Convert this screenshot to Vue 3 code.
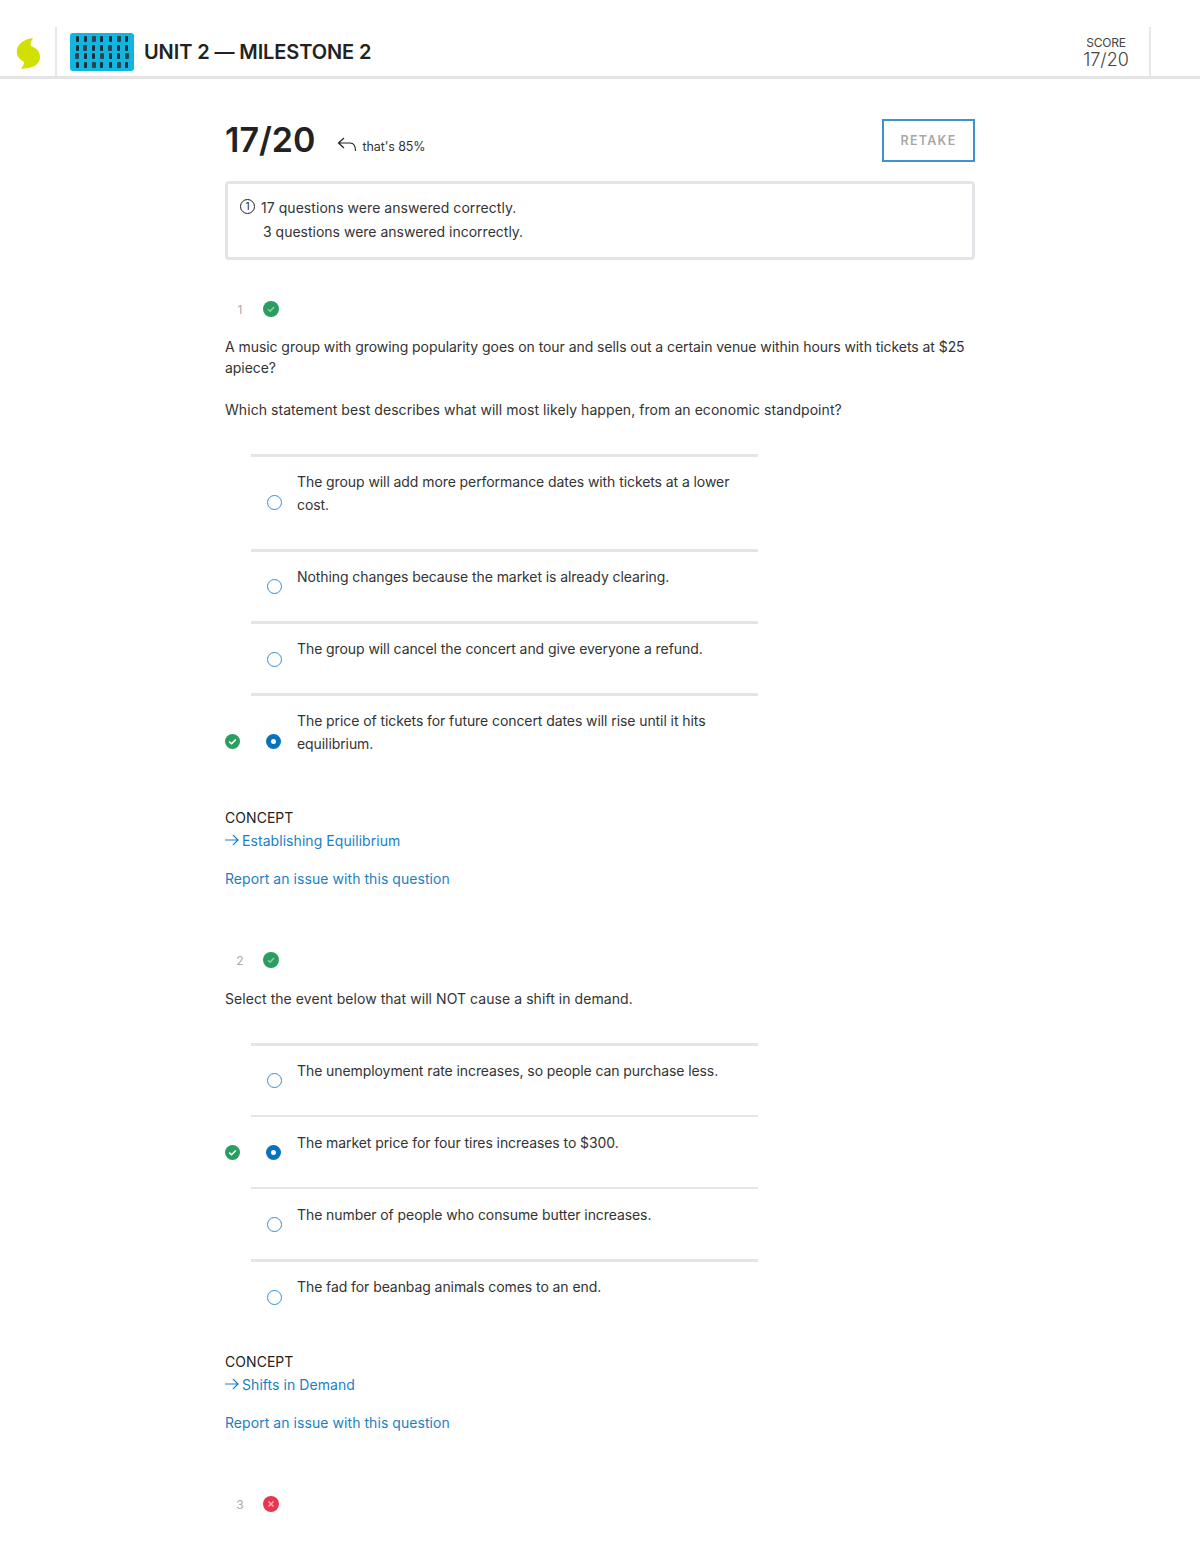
<script setup>
const questions = [
  {
    num: 1, paragraphs: ['A music group with growing popularity goes on tour and sells out a certain venue within hours with tickets at $25 apiece?', 'Which statement best describes what will most likely happen, from an economic standpoint?'],
    options: [
      { text: 'The group will add more performance dates with tickets at a lower cost.', tall: true },
      { text: 'Nothing changes because the market is already clearing.' },
      { text: 'The group will cancel the concert and give everyone a refund.' },
      { text: 'The price of tickets for future concert dates will rise until it hits equilibrium.', picked: true, tall: true }
    ],
    concept: 'Establishing Equilibrium'
  },
  {
    num: 2, paragraphs: ['Select the event below that will NOT cause a shift in demand.'],
    options: [
      { text: 'The unemployment rate increases, so people can purchase less.' },
      { text: 'The market price for four tires increases to $300.', picked: true, thin: true },
      { text: 'The number of people who consume butter increases.', thin: true },
      { text: 'The fad for beanbag animals comes to an end.' }
    ],
    concept: 'Shifts in Demand'
  }
]
const figures = Array.from({ length: 28 }, (_, i) => i)
</script>

<template>
  <div class="page">
    <header class="topbar">
      <div class="logo-cell">
        <svg width="24" height="31" viewBox="0 0 24 31" class="logo"><path d="M17 0 C15 3 14 6 15 8 C20 10 24 13 24 19 C24 25 19 29 12 30 L5 31 C7 28 8 26 8 24 C3 21 0 17 1 12 C2 5 9 1 17 0 Z" fill="#d2e000"/></svg>
      </div>
      <div class="thumb">
        <i v-for="f in figures" :key="f" class="figure"></i>
      </div>
      <h1 class="unit">UNIT 2 — MILESTONE 2</h1>
      <div class="score">
        <span class="score-label">SCORE</span>
        <span class="score-value">17/20</span>
      </div>
    </header>

    <main class="main">
      <div class="summary">
        <div class="big-score">17/20</div>
        <svg class="back" width="20" height="16" viewBox="0 0 20 16"><path d="M7 2 L1.5 7 L7 12 M2 7 H13 C16.5 7 18.5 9.5 18.5 15" fill="none" stroke="#222" stroke-width="1.2"/></svg>
        <span class="thats">that's 85%</span>
        <button class="retake">RETAKE</button>
      </div>

      <div class="notice">
        <span class="info">1</span>
        <div>
          <p class="notice-line">17 questions were answered correctly.</p>
          <p class="notice-line second">3 questions were answered incorrectly.</p>
        </div>
      </div>

      <section v-for="q in questions" :key="q.num" class="question">
        <div class="q-head">
          <span class="q-num">{{ q.num }}</span>
          <svg class="status" width="16" height="16" viewBox="0 0 16 16"><circle cx="8" cy="8" r="8" fill="#2a9d5f"/><path d="M5 8.2 L7.2 10.2 L11 6" fill="none" stroke="#8fcfae" stroke-width="1.5"/></svg>
        </div>
        <p v-for="(p, i) in q.paragraphs" :key="i" class="q-text">{{ p }}</p>
        <ul class="options">
          <li v-for="(o, i) in q.options" :key="i" class="option" :class="{ tall: o.tall, thin: o.thin, picked: o.picked }">
            <svg v-if="o.picked" class="opt-check" width="15" height="15" viewBox="0 0 16 16"><circle cx="8" cy="8" r="8" fill="#2a9d5f"/><path d="M4.5 8.2 L7 10.4 L11.5 5.8" fill="none" stroke="#fff" stroke-width="1.7"/></svg>
            <span class="radio"></span>
            <span class="opt-text">{{ o.text }}</span>
          </li>
        </ul>
        <div class="concept">CONCEPT</div>
        <a class="link concept-link"><svg width="14" height="12" viewBox="0 0 14 12"><path d="M0 6 H13 M8 1 L13 6 L8 11" fill="none" stroke="#1a7fc4" stroke-width="1.1"/></svg>{{ q.concept }}</a>
        <a class="link report">Report an issue with this question</a>
      </section>

      <div class="q-head last">
        <span class="q-num">3</span>
        <svg class="status" width="16" height="16" viewBox="0 0 16 16"><circle cx="8" cy="8" r="8" fill="#e8364f"/><path d="M5.5 5.5 L10.5 10.5 M10.5 5.5 L5.5 10.5" stroke="#f3b0ba" stroke-width="1.5"/></svg>
      </div>
    </main>
  </div>
</template>

<style scoped>
.page { width: 1200px; height: 1553px; background: #fff; color: #222; font-family: "Inter", "Liberation Sans", sans-serif; overflow: hidden; }
.topbar { display: flex; align-items: center; height: 49px; padding-top: 27px; border-bottom: 3px solid #e4e4e6; box-sizing: content-box; }
.logo-cell { width: 55px; height: 49px; border-right: 2px solid #e8e8ea; display: flex; align-items: center; justify-content: center; box-sizing: content-box; }
.logo { margin-top: 4px; }
.thumb { width: 64px; height: 38px; margin-left: 13px; margin-top: 1px; background: #12b5dd; border-radius: 3px; display: grid; grid-template-columns: repeat(7, 1fr); grid-template-rows: repeat(4, 1fr); padding: 2px 3px; box-sizing: border-box; place-items: center; }
.figure { width: 3px; height: 6px; background: #16303f; border-radius: 1px; }
.figure:nth-child(3n) { width: 4px; background: #2a4450; }
.unit { margin: 1px 0 0 10px; font-size: 20px; font-weight: 600; letter-spacing: -0.1px; color: #222; }
.score { margin-left: auto; width: 86px; margin-right: 49px; height: 40px; border-right: 2px solid #e8e8ea; display: flex; flex-direction: column; align-items: center; padding-top: 9px; box-sizing: content-box; }
.score-label { font-size: 12px; line-height: 13px; letter-spacing: -0.2px; color: #444; }
.score-value { font-size: 18px; line-height: 22px; color: #444; font-weight: 300; }
.main { width: 750px; margin: 0 auto; }
.summary { display: flex; align-items: center; height: 44px; margin-top: 39px; }
.big-score { font-size: 34px; font-weight: 600; color: #222; line-height: 44px; }
.back { margin-left: 22px; margin-top: 8px; }
.thats { font-size: 12.5px; margin-left: 5px; margin-top: 12px; color: #333; letter-spacing: -0.1px; }
.retake { margin-left: auto; align-self: flex-end; width: 93px; height: 43px; background: #fff; border: 2px solid #3d93cf; color: #a8a8a8; font: 600 12.5px "Inter", "Liberation Sans", sans-serif; letter-spacing: 1.3px; padding: 0; }
.notice { display: flex; margin-top: 19px; height: 79px; border: 3px solid #e4e5e9; border-radius: 4px; box-sizing: border-box; padding: 12px 0 0 12px; }
.info { width: 15px; height: 15px; border: 1.3px solid #222; border-radius: 50%; font-size: 10px; line-height: 13px; text-align: center; margin: 3px 6px 0 0; box-sizing: border-box; flex: none; }
.notice-line { margin: 0; font-size: 14px; line-height: 24px; color: #333; letter-spacing: 0.05px; }
.notice-line.second { padding-left: 2px; letter-spacing: 0; }
.q-head { display: flex; align-items: center; height: 16px; margin-top: 41px; }
.q-num { width: 30px; text-align: center; font-size: 12px; color: #aaa; }
.status { margin-left: 8px; }
.q-text { margin: 19px 0 0; font-size: 14px; line-height: 21px; color: #333; letter-spacing: 0.06px; }
.question:first-of-type .q-text:first-of-type { letter-spacing: -0.06px; }
.question + .question .q-text { margin-top: 20px; }
.q-text + .q-text { margin-top: 21px; }
.options { list-style: none; margin: 34px 0 0 26px; padding: 0; width: 507px; }
.option { position: relative; height: 72px; border-top: 3px solid #e4e5e9; box-sizing: border-box; padding: 13px 0 0 46px; font-size: 14px; line-height: 23px; color: #333; letter-spacing: -0.08px; }
.option.thin { border-top-width: 2px; padding-top: 14px; }
.option.tall { height: 95px; }
.option.tall.picked { height: 94px; }
.radio { position: absolute; left: 16px; top: 27px; width: 15px; height: 15px; border: 1.7px solid #2f8fd6; border-radius: 50%; box-sizing: border-box; }
.option:nth-child(n+3) .radio, .option.thin .radio { top: 28px; }
.option.tall .radio { top: 38px; }
.option.picked .radio { border: 5.5px solid #0a72bd; left: 15px; top: 28px; }
.option.tall.picked .radio { top: 38px; }
.opt-check { position: absolute; left: -26px; top: 28px; }
.option.tall .opt-check { top: 38px; }
.concept { margin-top: 19px; font-size: 14px; line-height: 23px; color: #222; letter-spacing: 0.05px; }
.link { display: block; color: #1a7fc4; font-size: 14px; line-height: 23px; letter-spacing: 0.06px; }
.concept-link svg { margin-right: 3px; }
.report { margin-top: 15px; }
.question { padding-bottom: 21px; }
</style>
